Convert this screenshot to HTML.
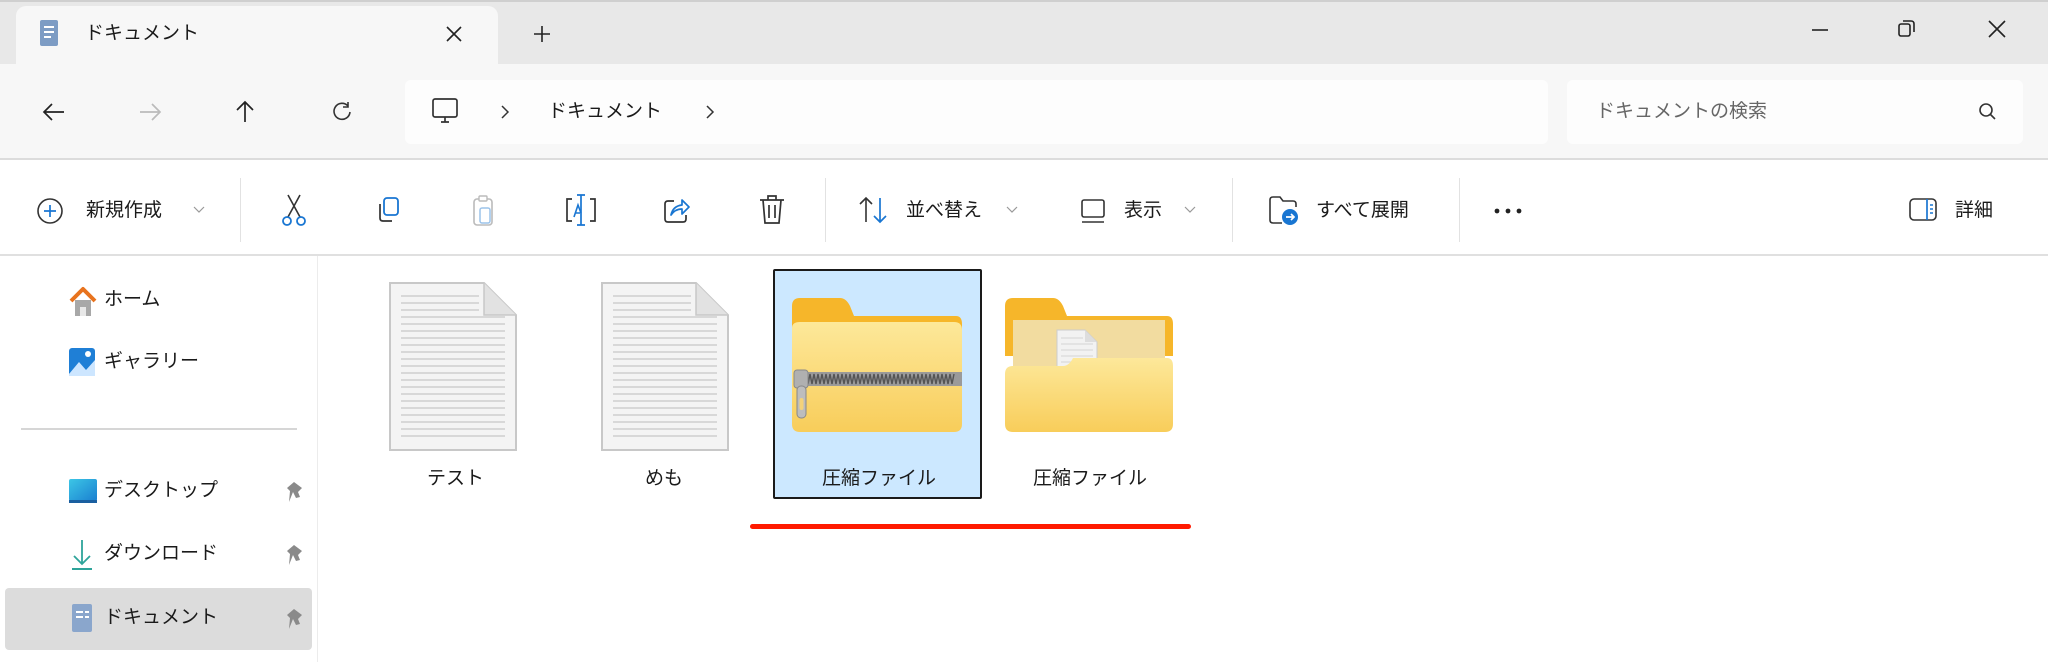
<!DOCTYPE html>
<html><head><meta charset="utf-8"><style>
*{margin:0;padding:0;box-sizing:border-box}
body{width:2048px;height:662px;overflow:hidden;background:#fff;font-family:"Liberation Sans","Noto Sans CJK JP",sans-serif;color:#1a1a1a;position:relative}
.a{position:absolute}
.t{position:absolute;font-size:19px;line-height:24px;white-space:nowrap}
svg{position:absolute;overflow:visible}
</style></head><body>
<!-- tab bar -->
<div class="a" style="left:0;top:0;width:2048px;height:64px;background:#e8e8e8;border-top:2px solid #cfcfcf"></div>
<div class="a" style="left:16px;top:6px;width:482px;height:60px;background:#f7f7f7;border-radius:10px 10px 0 0"></div>
<svg style="left:40px;top:20px" width="20" height="28"><rect x="0" y="0" width="18" height="26" rx="2" fill="#7d9cc4"/><rect x="4" y="6" width="10" height="2" fill="#fff"/><rect x="4" y="11" width="10" height="2" fill="#fff"/><rect x="4" y="16" width="7" height="2" fill="#fff"/></svg>
<div class="t" style="left:85px;top:22px">ドキュメント</div>
<svg style="left:446px;top:26px" width="16" height="16"><path d="M1 1L15 15M15 1L1 15" stroke="#222" stroke-width="1.6"/></svg>
<svg style="left:533px;top:25px" width="18" height="18"><path d="M9 1V17M1 9H17" stroke="#222" stroke-width="1.6"/></svg>
<svg style="left:1812px;top:28px" width="18" height="4"><path d="M0 2H16" stroke="#222" stroke-width="1.6"/></svg>
<svg style="left:1898px;top:20px" width="18" height="18"><rect x="1" y="4" width="11" height="12" rx="2" fill="none" stroke="#222" stroke-width="1.6"/><path d="M5 1H13Q16 1 16 4V12" fill="none" stroke="#222" stroke-width="1.6"/></svg>
<svg style="left:1988px;top:20px" width="18" height="18"><path d="M1 1L17 17M17 1L1 17" stroke="#222" stroke-width="1.6"/></svg>
<!-- nav bar -->
<div class="a" style="left:0;top:64px;width:2048px;height:96px;background:#f7f7f7;border-bottom:2px solid #dcdcdc"></div>
<svg style="left:42px;top:102px" width="24" height="20"><path d="M22 10H2M10 2L2 10L10 18" fill="none" stroke="#222" stroke-width="1.7"/></svg>
<svg style="left:138px;top:102px" width="24" height="20"><path d="M2 10H22M14 2L22 10L14 18" fill="none" stroke="#bbb" stroke-width="1.7"/></svg>
<svg style="left:235px;top:100px" width="20" height="24"><path d="M10 22V2M2 10L10 2L18 10" fill="none" stroke="#222" stroke-width="1.7"/></svg>
<svg style="left:331px;top:101px" width="22" height="22"><path d="M17 5A8 8 0 1 0 19 11M17 1V6H12" fill="none" stroke="#333" stroke-width="1.6"/></svg>
<div class="a" style="left:405px;top:80px;width:1143px;height:64px;background:#fdfdfd;border-radius:6px"></div>
<svg style="left:431px;top:98px" width="28" height="28"><rect x="2" y="1" width="24" height="18" rx="2" fill="none" stroke="#333" stroke-width="1.7"/><path d="M10 24H18M14 19V24" stroke="#333" stroke-width="1.7"/></svg>
<svg style="left:500px;top:104px" width="10" height="16"><path d="M2 2L8 8L2 14" fill="none" stroke="#333" stroke-width="1.5"/></svg>
<div class="t" style="left:548px;top:100px">ドキュメント</div>
<svg style="left:705px;top:104px" width="10" height="16"><path d="M2 2L8 8L2 14" fill="none" stroke="#333" stroke-width="1.5"/></svg>
<div class="a" style="left:1567px;top:80px;width:456px;height:64px;background:#fdfdfd;border-radius:6px"></div>
<div class="t" style="left:1596px;top:100px;color:#666">ドキュメントの検索</div>
<svg style="left:1978px;top:102px" width="20" height="20"><circle cx="8" cy="8" r="6" fill="none" stroke="#333" stroke-width="1.6"/><path d="M12.5 12.5L17 17" stroke="#333" stroke-width="1.6"/></svg>
<!-- toolbar -->
<div class="a" style="left:0;top:254px;width:2048px;height:2px;background:#e0e0e0"></div>
<svg style="left:36px;top:197px" width="28" height="28"><circle cx="14" cy="14" r="12" fill="none" stroke="#333" stroke-width="1.6"/><path d="M14 8V20M8 14H20" stroke="#1976d2" stroke-width="1.7"/></svg>
<div class="t" style="left:86px;top:199px">新規作成</div>
<svg style="left:193px;top:206px" width="12" height="8"><path d="M1 1L6 6L11 1" fill="none" stroke="#999" stroke-width="1.2"/></svg>
<div class="a" style="left:240px;top:178px;width:1px;height:64px;background:#e2e2e2"></div>
<svg style="left:280px;top:193px" width="28" height="34"><path d="M8 2L20 24M20 2L8 24" stroke="#333" stroke-width="1.6"/><circle cx="7" cy="28" r="4" fill="none" stroke="#1976d2" stroke-width="1.8"/><circle cx="21" cy="28" r="4" fill="none" stroke="#1976d2" stroke-width="1.8"/></svg>
<svg style="left:375px;top:196px" width="28" height="28"><rect x="9" y="2" width="14" height="17" rx="3" fill="none" stroke="#1976d2" stroke-width="1.8"/><path d="M5 8V22Q5 25 8 25H17" fill="none" stroke="#333" stroke-width="1.7"/></svg>
<svg style="left:470px;top:194px" width="28" height="34"><rect x="4" y="5" width="18" height="26" rx="3" fill="none" stroke="#bbb" stroke-width="1.6"/><rect x="9" y="2" width="8" height="5" rx="1" fill="#fff" stroke="#bbb" stroke-width="1.4"/><rect x="10" y="14" width="10" height="15" rx="2" fill="none" stroke="#9cc3ea" stroke-width="1.5"/></svg>
<svg style="left:564px;top:193px" width="34" height="34"><path d="M8 6H3V28H8M26 6H31V28H26" fill="none" stroke="#333" stroke-width="1.7"/><path d="M17 2V32M13 2H21M13 32H21" stroke="#1976d2" stroke-width="1.7"/><path d="M10 24L14 12L17 20M11.5 20H16" fill="none" stroke="#1976d2" stroke-width="1.6"/></svg>
<svg style="left:662px;top:195px" width="30" height="30"><path d="M12 6H6Q3 6 3 9V24Q3 27 6 27H21Q24 27 24 24V20" fill="none" stroke="#333" stroke-width="1.7"/><path d="M9 20Q11 11 20 10V5L27 12L20 19V14Q13 14 9 20Z" fill="none" stroke="#1976d2" stroke-width="1.7" stroke-linejoin="round"/></svg>
<svg style="left:758px;top:193px" width="28" height="34"><path d="M2 7H26M10 7V3H18V7M5 7L7 30H21L23 7M11 12V25M17 12V25" fill="none" stroke="#333" stroke-width="1.7"/></svg>
<div class="a" style="left:825px;top:178px;width:1px;height:64px;background:#e2e2e2"></div>
<svg style="left:858px;top:196px" width="30" height="28"><path d="M8 26V2M2 8L8 2L14 8" fill="none" stroke="#333" stroke-width="1.6"/><path d="M22 2V26M16 20L22 26L28 20" fill="none" stroke="#1976d2" stroke-width="1.7"/></svg>
<div class="t" style="left:906px;top:199px">並べ替え</div>
<svg style="left:1006px;top:206px" width="12" height="8"><path d="M1 1L6 6L11 1" fill="none" stroke="#999" stroke-width="1.2"/></svg>
<svg style="left:1080px;top:198px" width="26" height="26"><rect x="2" y="2" width="22" height="17" rx="2" fill="none" stroke="#333" stroke-width="1.6"/><path d="M2 24H24" stroke="#333" stroke-width="1.6"/></svg>
<div class="t" style="left:1124px;top:199px">表示</div>
<svg style="left:1184px;top:206px" width="12" height="8"><path d="M1 1L6 6L11 1" fill="none" stroke="#999" stroke-width="1.2"/></svg>
<div class="a" style="left:1232px;top:178px;width:1px;height:64px;background:#e2e2e2"></div>
<svg style="left:1268px;top:195px" width="34" height="32"><path d="M14 28H5Q2 28 2 25V5Q2 2 5 2H12L15 6H25Q28 6 28 9V12" fill="none" stroke="#333" stroke-width="1.6"/><circle cx="22" cy="22" r="8" fill="#1976d2"/><path d="M18 22H26M23 19L26 22L23 25" fill="none" stroke="#fff" stroke-width="1.7"/></svg>
<div class="t" style="left:1316px;top:199px">すべて展開</div>
<div class="a" style="left:1459px;top:178px;width:1px;height:64px;background:#e2e2e2"></div>
<svg style="left:1494px;top:208px" width="30" height="6"><circle cx="3" cy="3" r="2.4" fill="#222"/><circle cx="14" cy="3" r="2.4" fill="#222"/><circle cx="25" cy="3" r="2.4" fill="#222"/></svg>
<svg style="left:1908px;top:197px" width="30" height="26"><rect x="2" y="2" width="26" height="21" rx="4" fill="none" stroke="#333" stroke-width="1.6"/><path d="M19 2V23" stroke="#1976d2" stroke-width="1.7"/><path d="M22 8H25M22 12H25M22 16H25" stroke="#1976d2" stroke-width="1.5"/></svg>
<div class="t" style="left:1955px;top:199px">詳細</div>
<!-- sidebar -->
<div class="a" style="left:317px;top:256px;width:1px;height:406px;background:#ececec"></div>
<svg style="left:68px;top:286px" width="30" height="32"><path d="M3 15L15 3L27 15" fill="none" stroke="#e8731e" stroke-width="4" stroke-linejoin="round"/><path d="M7 14V30H23V14" fill="#a8a8a8"/><rect x="12" y="21" width="6" height="9" fill="#e8e8e8"/></svg>
<div class="t" style="left:104px;top:288px">ホーム</div>
<svg style="left:68px;top:346px" width="28" height="32"><rect x="1" y="2" width="26" height="28" rx="3" fill="#1f7fd6"/><path d="M1 28L11 16L18 24L27 14V30H1Z" fill="#cde6ff"/><circle cx="20" cy="8" r="3" fill="#fff"/></svg>
<div class="t" style="left:104px;top:350px">ギャラリー</div>
<div class="a" style="left:21px;top:428px;width:276px;height:2px;background:#d6d6d6"></div>
<svg style="left:68px;top:477px" width="30" height="28"><defs><linearGradient id="dg" x1="0" y1="0" x2="1" y2="1"><stop offset="0" stop-color="#3cc6e6"/><stop offset="1" stop-color="#1a7fd0"/></linearGradient></defs><rect x="1" y="2" width="28" height="22" rx="2" fill="url(#dg)"/><rect x="1" y="23" width="28" height="3" fill="#1a5fa0"/></svg>
<div class="t" style="left:104px;top:479px">デスクトップ</div>
<svg style="left:70px;top:538px" width="24" height="34"><path d="M12 2V26M4 18L12 26L20 18" fill="none" stroke="#2ea49a" stroke-width="1.8"/><path d="M2 31H22" stroke="#2ea49a" stroke-width="2"/></svg>
<div class="t" style="left:104px;top:542px">ダウンロード</div>
<div class="a" style="left:5px;top:588px;width:307px;height:62px;background:#dcdcdc;border-radius:4px"></div>
<svg style="left:72px;top:604px" width="22" height="30"><rect x="0" y="0" width="20" height="28" rx="2" fill="#8aa6cc"/><rect x="4" y="7" width="7" height="2" fill="#fff"/><rect x="13" y="7" width="4" height="2" fill="#fff"/><rect x="4" y="12" width="7" height="2" fill="#fff"/><rect x="13" y="12" width="4" height="2" fill="#fff"/></svg>
<div class="t" style="left:104px;top:606px">ドキュメント</div>
<svg style="left:286px;top:480px" width="20" height="24"><path d="M8 2L16 8L12 12L14 17L10 18L7 12L3 22L4 11L1 8Z" fill="#8a8a8a"/></svg>
<svg style="left:286px;top:543px" width="20" height="24"><path d="M8 2L16 8L12 12L14 17L10 18L7 12L3 22L4 11L1 8Z" fill="#8a8a8a"/></svg>
<svg style="left:286px;top:607px" width="20" height="24"><path d="M8 2L16 8L12 12L14 17L10 18L7 12L3 22L4 11L1 8Z" fill="#8a8a8a"/></svg>
<!-- files -->
<svg style="left:389px;top:282px" width="128" height="172">
<path d="M1 1H95L127 33V168H1Z" fill="#f4f4f4" stroke="#c8c8c8" stroke-width="2"/>
<path d="M95 1V33H127" fill="#e2e2e2" stroke="#c8c8c8" stroke-width="1.5"/>
<g stroke="#c8c8c8" stroke-width="1.3"><path d="M12 14H90M12 21H90M12 28H90M12 35H116M12 42H116M12 49H116M12 56H116M12 63H116M12 70H116M12 77H116M12 84H116M12 91H116M12 98H116M12 105H116M12 112H116M12 119H116M12 126H116M12 133H116M12 140H116M12 147H116M12 154H116"/></g></svg>
<div class="t" style="left:427px;top:467px">テスト</div>
<svg style="left:601px;top:282px" width="128" height="172">
<path d="M1 1H95L127 33V168H1Z" fill="#f4f4f4" stroke="#c8c8c8" stroke-width="2"/>
<path d="M95 1V33H127" fill="#e2e2e2" stroke="#c8c8c8" stroke-width="1.5"/>
<g stroke="#c8c8c8" stroke-width="1.3"><path d="M12 14H90M12 21H90M12 28H90M12 35H116M12 42H116M12 49H116M12 56H116M12 63H116M12 70H116M12 77H116M12 84H116M12 91H116M12 98H116M12 105H116M12 112H116M12 119H116M12 126H116M12 133H116M12 140H116M12 147H116M12 154H116"/></g></svg>
<div class="t" style="left:645px;top:467px">めも</div>
<div class="a" style="left:773px;top:269px;width:209px;height:230px;background:#cce8ff;border:2px solid #1a1a1a;border-radius:2px"></div>
<svg style="left:790px;top:296px" width="174" height="138"><defs><linearGradient id="fg" x1="0" y1="0" x2="0" y2="1"><stop offset="0" stop-color="#fde89a"/><stop offset="1" stop-color="#f8cd5a"/></linearGradient></defs>
<path d="M2 10Q2 2 10 2H50Q56 2 60 10L64 20H166Q172 20 172 28V60H2Z" fill="#f6b62a"/>
<path d="M2 32Q2 26 10 26H164Q172 26 172 34V128Q172 136 164 136H10Q2 136 2 128Z" fill="url(#fg)"/>
<rect x="10" y="76" width="162" height="14" fill="#9a9a9a"/>
<path d="M16 78L18 88L20 78L22 88L24 78L26 88L28 78L30 88L32 78L34 88L36 78L38 88L40 78L42 88L44 78L46 88L48 78L50 88L52 78L54 88L56 78L58 88L60 78L62 88L64 78L66 88L68 78L70 88L72 78L74 88L76 78L78 88L80 78L82 88L84 78L86 88L88 78L90 88L92 78L94 88L96 78L98 88L100 78L102 88L104 78L106 88L108 78L110 88L112 78L114 88L116 78L118 88L120 78L122 88L124 78L126 88L128 78L130 88L132 78L134 88L136 78L138 88L140 78L142 88L144 78L146 88L148 78L150 88L152 78L154 88L156 78L158 88L160 78L162 88L164 78" fill="none" stroke="#555" stroke-width="1.4"/>
<rect x="4" y="74" width="14" height="18" rx="3" fill="#b0b0b0" stroke="#888"/>
<rect x="7" y="90" width="9" height="32" rx="4" fill="#bdbdbd" stroke="#888"/>
<rect x="9.5" y="102" width="4" height="12" rx="2" fill="#f3d27a"/>
</svg>
<div class="t" style="left:822px;top:467px">圧縮ファイル</div>
<svg style="left:1003px;top:296px" width="172" height="138">
<path d="M2 10Q2 2 10 2H50Q56 2 60 10L64 20H164Q170 20 170 28V60H2Z" fill="#f6b62a"/>
<path d="M10 24H162V120H10Z" fill="#f2dca0"/>
<path d="M54 34H82L94 46V100H54Z" fill="#f2f2f2" stroke="#ccc"/>
<path d="M82 34V46H94" fill="#ddd"/>
<g stroke="#d4d4d4"><path d="M58 42H80M58 48H90M58 54H90M58 60H90M58 66H90M58 72H90"/></g>
<path d="M2 78Q2 70 10 70H60Q66 70 70 62H164Q170 62 170 70V128Q170 136 162 136H10Q2 136 2 128Z" fill="url(#fg)"/>
</svg>
<div class="t" style="left:1033px;top:467px">圧縮ファイル</div>
<div class="a" style="left:750px;top:524px;width:441px;height:5px;background:#ff1a00;border-radius:3px"></div>
</body></html>
